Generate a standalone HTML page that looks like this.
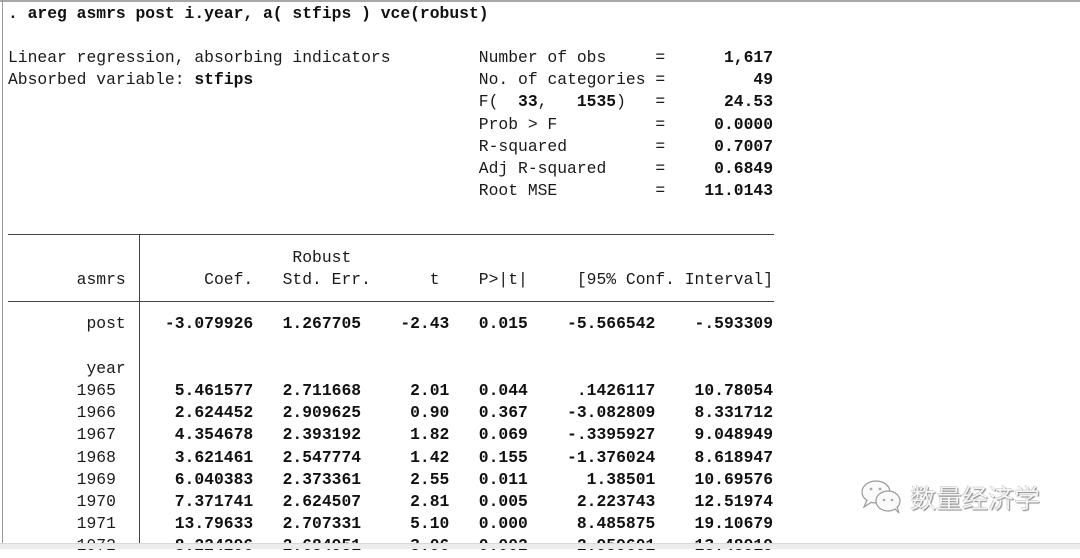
<!DOCTYPE html>
<html><head><meta charset="utf-8"><style>
html,body{margin:0;padding:0;background:#fff;}
body{width:1080px;height:548px;position:relative;overflow:hidden;}
.topb{position:absolute;left:0;top:0;width:1080px;height:2px;background:#a8a8a8;}
.leftb{position:absolute;left:2px;top:0;width:1px;height:548px;background:#9a9a9a;}
pre{position:absolute;left:8px;top:2.5px;margin:0;font-family:"Liberation Mono",monospace;font-size:16.35px;line-height:22.2px;color:#1a1a1a;white-space:pre;}
b{font-weight:bold;color:#111;}
.h{position:absolute;height:1px;background:#444;}
.v{position:absolute;width:1px;background:#444;}
.bot{position:absolute;left:0;top:543px;width:1080px;height:5px;background:#ececec;border-top:1px solid #d8d8d8;}
.wm{position:absolute;left:910px;top:483px;font-family:"Noto Sans CJK SC",sans-serif;font-size:26px;color:#f4f4f4;text-shadow:1px 1px 1px #888,-0.5px -0.5px 0 #bbb;letter-spacing:0px;line-height:30px;}
</style></head><body>
<div class="topb"></div><div class="leftb"></div>
<pre><b>. areg asmrs post i.year, a( stfips ) vce(robust)</b>

Linear regression, absorbing indicators         Number of obs     =      <b>1,617</b>
Absorbed variable: <b>stfips</b>                       No. of categories =         <b>49</b>
                                                F(  <b>33</b>,   <b>1535</b>)   =      <b>24.53</b>
                                                Prob &gt; F          =     <b>0.0000</b>
                                                R-squared         =     <b>0.7007</b>
                                                Adj R-squared     =     <b>0.6849</b>
                                                Root MSE          =    <b>11.0143</b>


                             Robust
       asmrs        Coef.   Std. Err.      t    P&gt;|t|     [95% Conf. Interval]

        post  <b>  -3.079926   1.267705    -2.43   0.015    -5.566542    -.593309</b>

        year
       1965   <b>   5.461577   2.711668     2.01   0.044     .1426117    10.78054</b>
       1966   <b>   2.624452   2.909625     0.90   0.367    -3.082809    8.331712</b>
       1967   <b>   4.354678   2.393192     1.82   0.069    -.3395927    9.048949</b>
       1968   <b>   3.621461   2.547774     1.42   0.155    -1.376024    8.618947</b>
       1969   <b>   6.040383   2.373361     2.55   0.011      1.38501    10.69576</b>
       1970   <b>   7.371741   2.624507     2.81   0.005     2.223743    12.51974</b>
       1971   <b>   13.79633   2.707331     5.10   0.000     8.485875    19.10679</b>
       1972   <b>   8.224296   2.684951     3.06   0.002     2.959601    13.48919</b></pre>
<div class="h" style="left:8px;top:234px;width:766px;"></div>
<div class="h" style="left:8px;top:301px;width:766px;"></div>
<div class="v" style="left:139px;top:234px;height:310px;"></div>
<div class="bot"></div>
<svg style="position:absolute;left:860px;top:478px" width="46" height="38" viewBox="0 0 46 38">
<g fill="#fafafa" stroke="#9a9a9a" stroke-width="1.2">
<ellipse cx="16" cy="14" rx="14" ry="11"/>
<path d="M7 22 L4 29 L12 24" />
<ellipse cx="28" cy="23" rx="12" ry="10"/>
<path d="M35 31 L39 35 L37 29"/>
</g>
<g fill="#aaa"><circle cx="11" cy="11" r="1.4"/><circle cx="20" cy="11" r="1.4"/><circle cx="24" cy="22" r="1.3"/><circle cx="32" cy="22" r="1.3"/></g>
</svg>
<div class="wm">数量经济学</div>
</body></html>
